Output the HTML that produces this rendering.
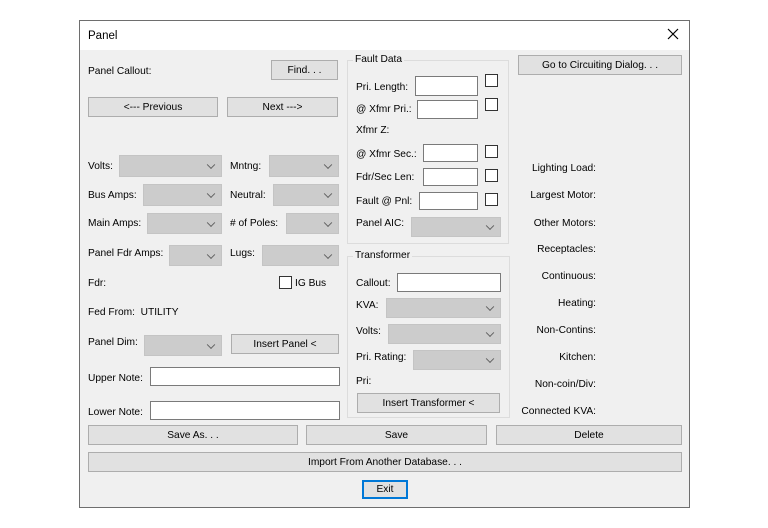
<!DOCTYPE html>
<html><head><style>
*{margin:0;padding:0;box-sizing:border-box}
body{width:768px;height:528px;background:#fff;font-family:"Liberation Sans",sans-serif;font-size:10.2px;color:#000;position:relative;overflow:hidden}
.dlg{position:absolute;left:79px;top:20px;width:611px;height:488px;border:1px solid #6e6e6e;background:#f0f0f0}
.tb{position:absolute;left:80px;top:21px;width:609px;height:29px;background:#fff}
.a{position:absolute;white-space:nowrap;line-height:14px;margin-top:1.5px}
.btn{position:absolute;background:#e1e1e1;border:1px solid #adadad;display:flex;align-items:center;justify-content:center;white-space:nowrap}
.cb{position:absolute;background:#cccccc;border:1px solid #c4c4c4}
.cb:after{content:"";position:absolute;right:7px;top:50%;width:5px;height:5px;border-right:1px solid #606060;border-bottom:1px solid #606060;transform:translateY(-70%) rotate(45deg)}
.in{position:absolute;background:#fff;border:1px solid #7a7a7a}
.ck{position:absolute;width:13px;height:13px;background:#fff;border:1px solid #333}
.grp{position:absolute;border:1px solid #dcdcdc}
.gt{position:absolute;background:#f0f0f0;padding:0 2px;line-height:14px}
.r{position:absolute;right:172px;white-space:nowrap;line-height:14px;margin-top:1.5px}
</style></head><body>
<div class="dlg"></div><div class="tb"></div>
<div class="a" style="left:88px;top:27px;font-size:11.5px">Panel</div>
<svg style="position:absolute;left:667px;top:28px" width="12" height="12"><path d="M1 1L11 11M11 1L1 11" stroke="#000" stroke-width="1.2"/></svg>

<div class="a" style="left:88px;top:63px">Panel Callout:</div>
<div class="btn" style="left:271px;top:60px;width:67px;height:20px">Find. . .</div>
<div class="btn" style="left:88px;top:97px;width:130px;height:20px">&lt;--- Previous</div>
<div class="btn" style="left:227px;top:97px;width:111px;height:20px">Next ---&gt;</div>

<div class="a" style="left:88px;top:158px">Volts:</div><div class="cb" style="left:119px;top:155px;width:103px;height:22px"></div>
<div class="a" style="left:230px;top:158px">Mntng:</div><div class="cb" style="left:269px;top:155px;width:70px;height:22px"></div>
<div class="a" style="left:88px;top:187px">Bus Amps:</div><div class="cb" style="left:143px;top:184px;width:79px;height:22px"></div>
<div class="a" style="left:230px;top:187px">Neutral:</div><div class="cb" style="left:273px;top:184px;width:66px;height:22px"></div>
<div class="a" style="left:88px;top:215px">Main Amps:</div><div class="cb" style="left:147px;top:213px;width:75px;height:21px"></div>
<div class="a" style="left:230px;top:215px"># of Poles:</div><div class="cb" style="left:286px;top:213px;width:53px;height:21px"></div>
<div class="a" style="left:88px;top:245px">Panel Fdr Amps:</div><div class="cb" style="left:169px;top:245px;width:53px;height:21px"></div>
<div class="a" style="left:230px;top:245px">Lugs:</div><div class="cb" style="left:262px;top:245px;width:77px;height:21px"></div>
<div class="a" style="left:88px;top:275px">Fdr:</div>
<div class="ck" style="left:279px;top:276px"></div><div class="a" style="left:295px;top:275px">IG Bus</div>
<div class="a" style="left:88px;top:304px">Fed From:&nbsp; UTILITY</div>
<div class="a" style="left:88px;top:334px">Panel Dim:</div><div class="cb" style="left:144px;top:335px;width:78px;height:21px"></div>
<div class="btn" style="left:231px;top:334px;width:108px;height:20px">Insert Panel &lt;</div>
<div class="a" style="left:88px;top:370px">Upper Note:</div><div class="in" style="left:150px;top:367px;width:190px;height:19px"></div>
<div class="a" style="left:88px;top:404px">Lower Note:</div><div class="in" style="left:150px;top:401px;width:190px;height:19px"></div>

<div class="grp" style="left:347px;top:60px;width:162px;height:184px"></div>
<div class="gt" style="left:353px;top:53px">Fault Data</div>
<div class="a" style="left:356px;top:79px">Pri. Length:</div><div class="in" style="left:415px;top:76px;width:63px;height:20px"></div><div class="ck" style="left:485px;top:74px"></div>
<div class="a" style="left:356px;top:101px">@ Xfmr Pri.:</div><div class="in" style="left:417px;top:100px;width:61px;height:19px"></div><div class="ck" style="left:485px;top:98px"></div>
<div class="a" style="left:356px;top:122px">Xfmr Z:</div>
<div class="a" style="left:356px;top:146px">@ Xfmr Sec.:</div><div class="in" style="left:423px;top:144px;width:55px;height:18px"></div><div class="ck" style="left:485px;top:145px"></div>
<div class="a" style="left:356px;top:169px">Fdr/Sec Len:</div><div class="in" style="left:423px;top:168px;width:55px;height:18px"></div><div class="ck" style="left:485px;top:169px"></div>
<div class="a" style="left:356px;top:193px">Fault @ Pnl:</div><div class="in" style="left:419px;top:192px;width:59px;height:18px"></div><div class="ck" style="left:485px;top:193px"></div>
<div class="a" style="left:356px;top:215px">Panel AIC:</div><div class="cb" style="left:411px;top:217px;width:90px;height:20px"></div>

<div class="grp" style="left:347px;top:256px;width:163px;height:162px"></div>
<div class="gt" style="left:353px;top:249px">Transformer</div>
<div class="a" style="left:356px;top:275px">Callout:</div><div class="in" style="left:397px;top:273px;width:104px;height:19px"></div>
<div class="a" style="left:356px;top:297px">KVA:</div><div class="cb" style="left:386px;top:298px;width:115px;height:20px"></div>
<div class="a" style="left:356px;top:323px">Volts:</div><div class="cb" style="left:388px;top:324px;width:113px;height:20px"></div>
<div class="a" style="left:356px;top:349px">Pri. Rating:</div><div class="cb" style="left:413px;top:350px;width:88px;height:20px"></div>
<div class="a" style="left:356px;top:373px">Pri:</div>
<div class="btn" style="left:357px;top:393px;width:143px;height:20px">Insert Transformer &lt;</div>

<div class="btn" style="left:518px;top:55px;width:164px;height:20px">Go to Circuiting Dialog. . .</div>
<div class="r" style="top:160px">Lighting Load:</div>
<div class="r" style="top:187px">Largest Motor:</div>
<div class="r" style="top:215px">Other Motors:</div>
<div class="r" style="top:241px">Receptacles:</div>
<div class="r" style="top:268px">Continuous:</div>
<div class="r" style="top:295px">Heating:</div>
<div class="r" style="top:322px">Non-Contins:</div>
<div class="r" style="top:349px">Kitchen:</div>
<div class="r" style="top:376px">Non-coin/Div:</div>
<div class="r" style="top:403px">Connected KVA:</div>

<div class="btn" style="left:88px;top:425px;width:210px;height:20px">Save As. . .</div>
<div class="btn" style="left:306px;top:425px;width:181px;height:20px">Save</div>
<div class="btn" style="left:496px;top:425px;width:186px;height:20px">Delete</div>
<div class="btn" style="left:88px;top:452px;width:594px;height:20px">Import From Another Database. . .</div>
<div class="btn" style="left:362px;top:480px;width:46px;height:19px;border:2px solid #0078d7">Exit</div>
</body></html>
